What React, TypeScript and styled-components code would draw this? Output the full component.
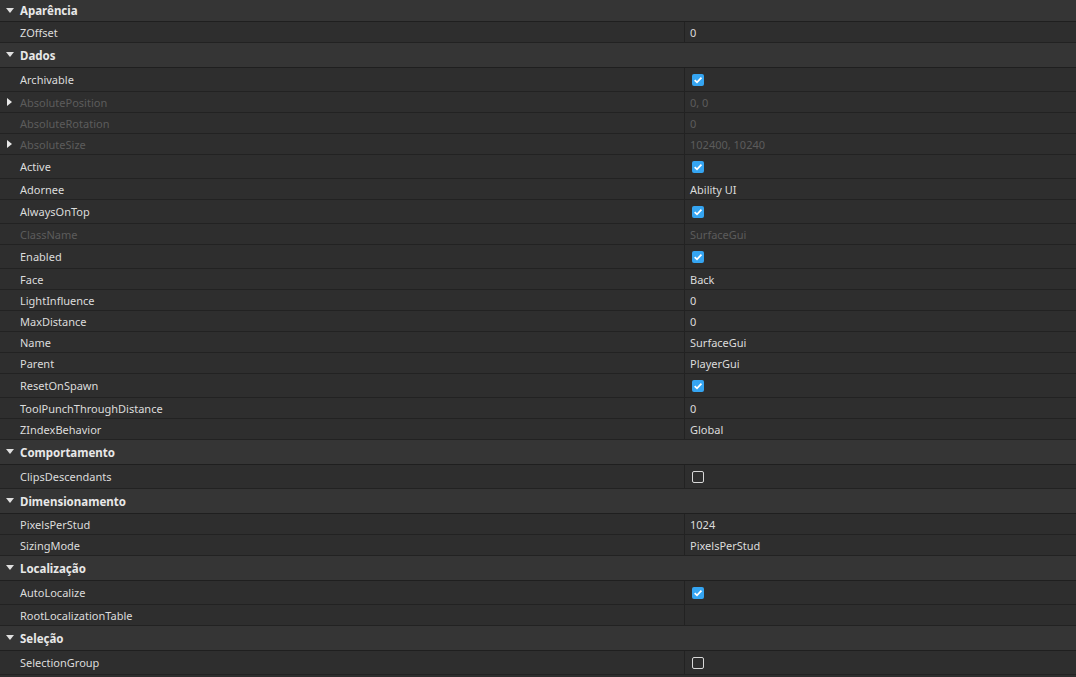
import React from "react";
import styled, { createGlobalStyle } from "styled-components";

const Global = createGlobalStyle`
  body { margin: 0; background: #2e2e2e; font-family: "Noto Sans", "Open Sans", sans-serif; }
`;

const Panel = styled.div`width: 1076px; height: 677px; overflow: hidden; background: #2e2e2e;`;
const Header = styled.div<{ h: number }>`
  height: ${p => p.h}px; display: flex; align-items: center; background: #353535;
  border-bottom: 1px solid #1f1f1f; color: #e8e8e8; font-weight: 700; font-size: 11.5px;
`;
const Arrow = styled.span`width: 20px; display: flex; justify-content: center; align-items: center;`;
const Row = styled.div<{ h: number }>`
  height: ${p => p.h}px; display: grid; grid-template-columns: 685px 1fr;
  border-bottom: 1px solid #222; font-size: 11px;
`;
const Cell = styled.div<{ dim?: boolean; left?: boolean }>`
  display: flex; align-items: center; color: ${p => (p.dim ? "#5c5c5c" : "#dcdcdc")};
  ${p => (p.left ? "border-right: 1px solid #222;" : "padding-left: 5px;")}
`;
const Name = styled.span`padding-left: 0;`;
const Box = styled.span<{ on: boolean }>`
  width: 12px; height: 12px; border-radius: 2px; box-sizing: border-box; margin-left: 2px;
  display: flex; align-items: center; justify-content: center;
  background: ${p => (p.on ? "#35a5f2" : "transparent")};
  border: ${p => (p.on ? "none" : "1.5px solid #d8d8d8")};
`;

const Down = () => (
  <svg width="8" height="6" viewBox="0 0 8 6"><path d="M0 0H8L4 5Z" fill="#e0e0e0" /></svg>
);
const Right = () => (
  <svg width="6" height="8" viewBox="0 0 6 8"><path d="M0 0V8L5 4Z" fill="#e8e8e8" /></svg>
);

type R = { n: string; v?: string; cb?: boolean; dim?: boolean; exp?: boolean };
type S = { title: string; rows: R[] };

const data: S[] = [
  { title: "Aparência", rows: [{ n: "ZOffset", v: "0" }] },
  { title: "Dados", rows: [
    { n: "Archivable", cb: true },
    { n: "AbsolutePosition", v: "0, 0", dim: true, exp: true },
    { n: "AbsoluteRotation", v: "0", dim: true },
    { n: "AbsoluteSize", v: "102400, 10240", dim: true, exp: true },
    { n: "Active", cb: true },
    { n: "Adornee", v: "Ability UI" },
    { n: "AlwaysOnTop", cb: true },
    { n: "ClassName", v: "SurfaceGui", dim: true },
    { n: "Enabled", cb: true },
    { n: "Face", v: "Back" },
    { n: "LightInfluence", v: "0" },
    { n: "MaxDistance", v: "0" },
    { n: "Name", v: "SurfaceGui" },
    { n: "Parent", v: "PlayerGui" },
    { n: "ResetOnSpawn", cb: true },
    { n: "ToolPunchThroughDistance", v: "0" },
    { n: "ZIndexBehavior", v: "Global" },
  ] },
  { title: "Comportamento", rows: [{ n: "ClipsDescendants", cb: false }] },
  { title: "Dimensionamento", rows: [
    { n: "PixelsPerStud", v: "1024" },
    { n: "SizingMode", v: "PixelsPerStud" },
  ] },
  { title: "Localização", rows: [
    { n: "AutoLocalize", cb: true },
    { n: "RootLocalizationTable", v: "" },
  ] },
  { title: "Seleção", rows: [{ n: "SelectionGroup", cb: false }] },
];

export default function App() {
  return (
    <Panel>
      <Global />
      {data.map((s, i) => (
        <React.Fragment key={s.title}>
          <Header h={i === 0 ? 21 : 24}><Arrow><Down /></Arrow>{s.title}</Header>
          {s.rows.map(r => {
            const isCb = r.cb !== undefined;
            return (
              <Row key={r.n} h={isCb ? 23 : 20}>
                <Cell left dim={r.dim}>
                  <Arrow>{r.exp && <Right />}</Arrow>
                  <Name>{r.n}</Name>
                </Cell>
                <Cell dim={r.dim}>
                  {isCb ? (
                    <Box on={!!r.cb}>
                      {r.cb && (
                        <svg width="10" height="10" viewBox="0 0 9 9">
                          <path d="M1.5 4.6L3.6 6.6L7.6 2.4" stroke="#fff" strokeWidth="1.6" fill="none" />
                        </svg>
                      )}
                    </Box>
                  ) : r.v}
                </Cell>
              </Row>
            );
          })}
        </React.Fragment>
      ))}
    </Panel>
  );
}
